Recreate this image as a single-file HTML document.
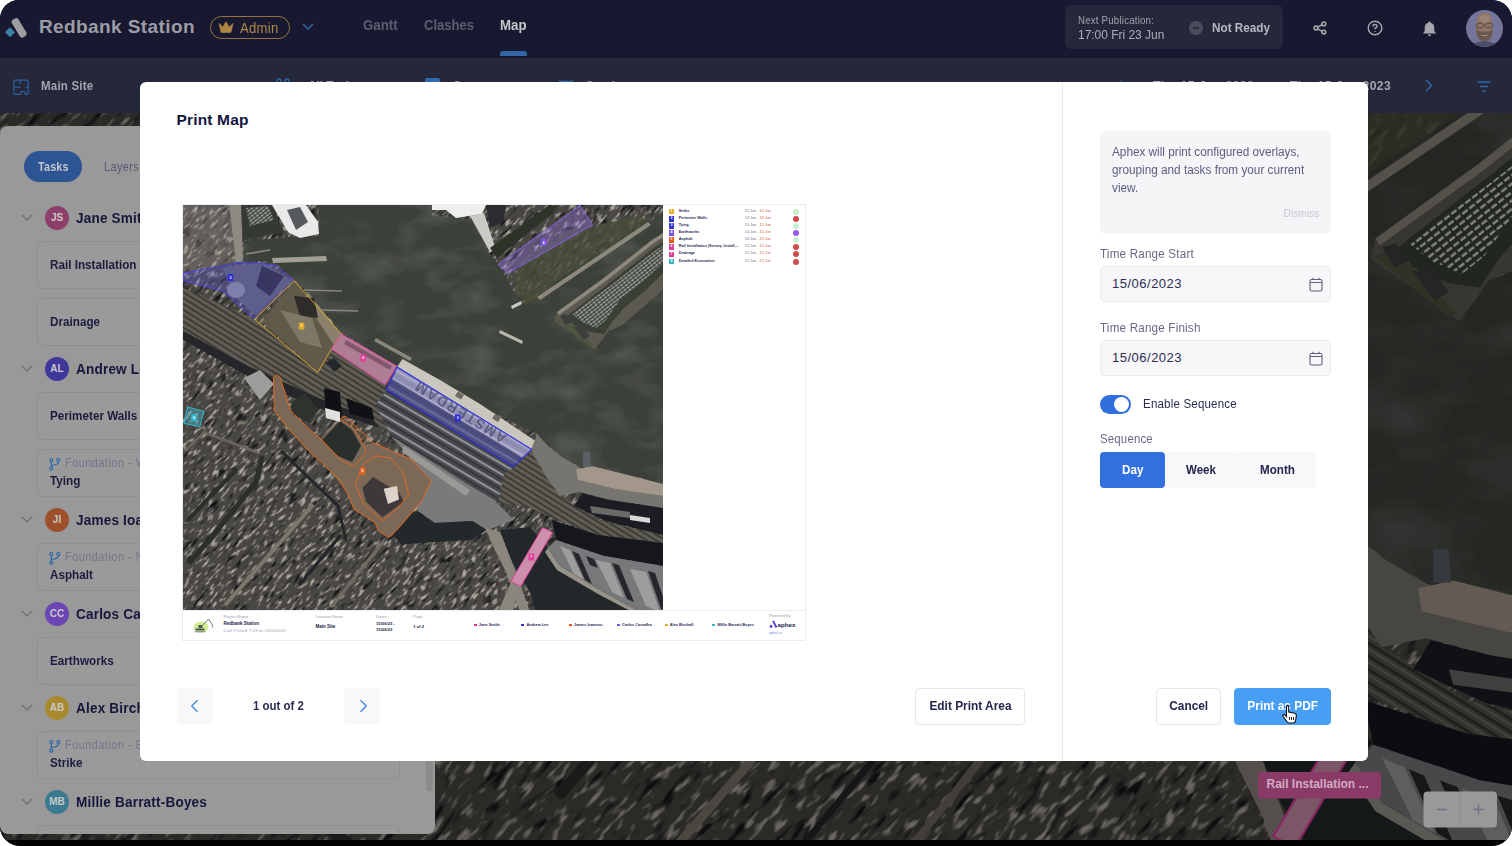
<!DOCTYPE html>
<html lang="en">
<head>
<meta charset="utf-8">
<title>Redbank Station - Print Map</title>
<style>
*{box-sizing:border-box;margin:0;padding:0}
html,body{width:1512px;height:846px;overflow:hidden;background:#fff}
body{font-family:"Liberation Sans",sans-serif;position:relative}
.abs{position:absolute}
#win{position:absolute;left:0;top:0;width:1512px;height:846px;border-radius:19px 20px 20px 20px;overflow:hidden;background:#000}
#nav{position:absolute;left:0;top:0;width:1512px;height:58px;background:#181930}
#sub{position:absolute;left:0;top:58px;width:1512px;height:55px;background:#25273a}
#map{position:absolute;left:0;top:113px;width:1512px;height:727px;background:#2f332c;overflow:hidden}
.t{position:absolute;white-space:nowrap;line-height:1;transform:scaleX(.9);transform-origin:0 50%}
/* left panel */
#panel{position:absolute;left:0;top:126px;width:435px;height:708px;background:#999999;border-radius:8px 8px 8px 8px;overflow:hidden}
.card{position:absolute;left:37px;width:363px;height:48px;border:1px solid #8f8f8f;border-radius:6px;background:#9a9a9a}
.card .n{transform:scaleX(.975);transform-origin:0 50%;position:absolute;left:12px;font-size:12px;font-weight:700;color:#1b1c3e;white-space:nowrap;line-height:1}
.card .f{transform:scaleX(.9);transform-origin:0 50%;position:absolute;left:26.500px;top:6.700px;font-size:12px;color:#737589;white-space:nowrap;line-height:1;letter-spacing:.6px}
.card svg{position:absolute;left:11.300px;top:7.600px}
.av{position:absolute;left:45px;width:24px;height:24px;border-radius:50%;color:#c9c9c9;font-size:10px;font-weight:700;text-align:center;line-height:24px}
.gn{transform:scaleX(.935);transform-origin:0 50%;position:absolute;left:75.500px;font-size:14.500px;font-weight:700;color:#15163b;white-space:nowrap;line-height:1;letter-spacing:.2px}
.chev{position:absolute;left:21px}
/* modal */
#modal{position:absolute;left:140px;top:82px;width:1228px;height:679px;background:#fff;border-radius:6px;overflow:hidden}
.lbl{transform:scaleX(.97);transform-origin:0 50%;position:absolute;font-size:12px;color:#676982;white-space:nowrap;line-height:1;letter-spacing:.2px}
.inp{position:absolute;left:960px;width:231px;height:36px;background:#f7f7f9;border:1px solid #e9e9ee;border-radius:5px}
.inp span{position:absolute;left:11px;top:10px;font-size:13px;color:#2a2c55;line-height:1;letter-spacing:.5px}
.btn b{display:inline-block;transform:scaleX(.99);font-weight:700}
.btn{position:absolute;height:36.600px;border:1px solid #e7e7ec;border-radius:4px;background:#fff;font-size:12px;font-weight:700;color:#23254f;text-align:center;line-height:34.600px;white-space:nowrap}
</style>
</head>
<body>
<div id="win">

<!-- NAVBAR -->
<div id="nav">
  <svg class="abs" style="left:0;top:14px" width="32" height="28" viewBox="0 14 32 28">
    <rect x="15.300" y="17.600" width="7.600" height="20.400" rx="2.600" fill="#9d9da2" transform="rotate(-31 19.100 27.800)"/>
    <path d="M10 27.200 L15 32.200 L10 37.200 L5 32.200 Z" fill="#3f80a8"/>
  </svg>
  <div class="t" style="left:39px;top:16.600px;font-size:19px;font-weight:700;color:#9c9ca5;letter-spacing:.4px;transform:none">Redbank Station</div>
  <div class="abs" style="left:210px;top:16px;width:80px;height:23px;border:1.300px solid #96723f;border-radius:12px"></div>
  <svg class="abs" style="left:218px;top:21px" width="16" height="13" viewBox="0 0 16 13"><path d="M1 2.400 L4.800 6 L8 0.800 L11.200 6 L15 2.400 L13.200 10.600 Q13 11.600 12 11.600 H4 Q3 11.600 2.800 10.600 Z" fill="#b08644" stroke="#b08644" stroke-width=".6" stroke-linejoin="round"/></svg>
  <div class="t" style="left:239.500px;top:21px;font-size:14px;color:#b18948;letter-spacing:.3px;transform:scaleX(.935)">Admin</div>
  <svg class="abs" style="left:302px;top:23px" width="12" height="8" viewBox="0 0 12 8"><path d="M1 1 L6 6 L11 1" stroke="#3566a4" stroke-width="1.500" fill="none"/></svg>
  <div class="t" style="left:363px;top:17px;font-size:15px;font-weight:700;color:#5c5d6f;transform:scaleX(.885)">Gantt</div>
  <div class="t" style="left:424px;top:17px;font-size:15px;font-weight:700;color:#5c5d6f;transform:scaleX(.87)">Clashes</div>
  <div class="t" style="left:500px;top:17px;font-size:15px;font-weight:700;color:#c6c6cb;transform:scaleX(.885)">Map</div>
  <div class="abs" style="left:500px;top:51px;width:27px;height:4.500px;background:#3464a8;border-radius:3px 3px 0 0"></div>
  <div class="abs" style="left:1065px;top:5px;width:218px;height:44px;background:#25273a;border-radius:6px"></div>
  <div class="t" style="left:1078px;top:15.500px;font-size:10px;color:#a0a1ad;letter-spacing:.2px;transform:scaleX(.97)">Next Publication:</div>
  <div class="t" style="left:1078px;top:28.500px;font-size:12px;color:#adaeba;transform:scaleX(.995)">17:00 Fri 23 Jun</div>
  <div class="abs" style="left:1189px;top:21px;width:14px;height:14px;border-radius:50%;background:#4b4c5c"></div>
  <div class="abs" style="left:1193px;top:27px;width:6px;height:2px;background:#2b2d40"></div>
  <div class="t" style="left:1211.500px;top:21.500px;font-size:12px;font-weight:700;color:#b7b8c1;transform:scaleX(.977)">Not Ready</div>
  <svg class="abs" style="left:1312.500px;top:20.500px" width="14" height="14" viewBox="0 0 14 14" fill="none" stroke="#a6a6ac" stroke-width="1.600"><circle cx="10.800" cy="2.900" r="1.900"/><circle cx="3" cy="7" r="1.900"/><circle cx="10.800" cy="11.100" r="1.900"/><path d="M4.700 6.100 L9.100 3.800 M4.700 7.900 L9.100 10.200"/></svg>
  <svg class="abs" style="left:1366.500px;top:19.500px" width="16" height="16" viewBox="0 0 16 16" fill="none" stroke="#a6a6ac" stroke-width="1.400"><circle cx="8" cy="8" r="6.800"/><path d="M6 6.400 Q6 4.400 8 4.400 Q10 4.400 10 6.200 Q10 7.300 8 8.300 V9.300" stroke-width="1.500"/><circle cx="8" cy="11.400" r=".7" fill="#a6a6ac" stroke="none"/></svg>
  <svg class="abs" style="left:1422px;top:21px" width="15" height="16" viewBox="0 0 15 16"><path d="M7.500 0.600 Q8.700 0.600 8.700 1.800 Q12.300 2.800 12.300 7 V10 L14 12.500 H1 L2.700 10 V7 Q2.700 2.800 6.300 1.800 Q6.300 0.600 7.500 0.600 Z M5.900 13.400 H9.100 Q9.100 15.200 7.500 15.200 Q5.900 15.200 5.900 13.400Z" fill="#a6a6ac"/></svg>
  <div class="abs" style="left:1466px;top:9.500px;width:37px;height:37px;border-radius:50%;background:#74759a;overflow:hidden">
    <svg width="37" height="37" viewBox="0 0 37 37"><ellipse cx="18.500" cy="40" rx="15" ry="9" fill="#4b4e6a"/><path d="M10.200 14 Q10.200 2.500 18.500 2.500 Q26.800 2.500 26.800 14 V20 Q26.800 31 18.500 31 Q10.200 31 10.200 20 Z" fill="#8f7468"/><ellipse cx="18.500" cy="9" rx="5.500" ry="4" fill="#a38a7c" opacity=".7"/><path d="M10.400 19 Q12 22 18.500 21.500 Q25 22 26.600 19 V21 Q26.600 31 18.500 31 Q10.400 31 10.400 21 Z" fill="#6a5850"/><path d="M14.500 24.500 Q18.500 27.500 22.500 24.500 Q18.500 26 14.500 24.500Z" fill="#b9a59a"/><rect x="10.500" y="13.200" width="7" height="4.600" rx="2" fill="none" stroke="#4d443f" stroke-width=".9"/><rect x="19.500" y="13.200" width="7" height="4.600" rx="2" fill="none" stroke="#4d443f" stroke-width=".9"/></svg>
  </div>
</div>

<!-- SUB BAR -->
<div id="sub">
  <svg class="abs" style="left:12.500px;top:20.500px" width="16" height="16.500" viewBox="0 0 16 16" fill="none" stroke="#2f619f" stroke-width="1.200" stroke-linejoin="round"><path d="M0.800 2.500 Q0.800 0.800 2.500 0.800 H13.500 Q15.200 0.800 15.200 2.500 V13.500 Q15.200 15.200 13.500 15.200 H12.400 L11.700 12.300 H8.600 L7.200 15.200 H2.500 Q0.800 15.200 0.800 13.500 Z M7.200 0.800 V5 M0.800 7.800 H7.400 M12.400 7.800 H15.200"/></svg>
  <div class="t" style="left:41px;top:22.200px;font-size:12px;font-weight:700;color:#a3a4ad;letter-spacing:.2px;transform:scaleX(.96)">Main Site</div>
  <svg class="abs" style="left:276px;top:20px" width="14" height="14" viewBox="0 0 14 14" fill="none" stroke="#2f68ad" stroke-width="1.3"><circle cx="3" cy="3" r="2"/><circle cx="11" cy="3" r="2"/></svg>
  <div class="t" style="left:308px;top:21px;font-size:13px;font-weight:700;color:#a3a4ad">All Tasks</div>
  <div class="abs" style="left:425px;top:20px;width:15px;height:12px;background:#2f68ad;border-radius:2px"></div>
  <div class="t" style="left:453px;top:21px;font-size:13px;font-weight:700;color:#a3a4ad">Sequence</div>
  <svg class="abs" style="left:558px;top:21px" width="16" height="12" viewBox="0 0 16 12" fill="none" stroke="#2f68ad" stroke-width="1.3"><path d="M1 1 L3 2.5 H13 L15 1 M3 2.5 V10"/></svg>
  <div class="t" style="left:585px;top:21px;font-size:13px;font-weight:700;color:#a3a4ad">Overlays</div>
  <svg class="abs" style="left:1114px;top:22px" width="8" height="13" viewBox="0 0 8 13"><path d="M7 1 L1.5 6.500 L7 12" stroke="#2f68ad" stroke-width="1.4" fill="none"/></svg>
  <div class="t" style="left:1153px;top:21px;font-size:13.500px;font-weight:700;color:#a3a4ad;letter-spacing:.5px">Thu 15 Jun 2023</div>
  <div class="t" style="left:1290px;top:21px;font-size:13.500px;font-weight:700;color:#a3a4ad;letter-spacing:.5px">Thu 15 Jun 2023</div>
  <svg class="abs" style="left:1425px;top:21px" width="8" height="13" viewBox="0 0 8 13"><path d="M1 1 L6.500 6.500 L1 12" stroke="#2f68ad" stroke-width="1.4" fill="none"/></svg>
  <svg class="abs" style="left:1477px;top:23px" width="14" height="11" viewBox="0 0 14 11"><path d="M0.500 1 H13.500 M3 5.500 H11 M5.500 10 H8.500" stroke="#2f68ad" stroke-width="1.6" fill="none"/></svg>
</div>

<!-- MAP -->
<div id="map"><svg class="abs" style="left:0;top:0" width="1512" height="727" viewBox="0 113 1512 727" font-family="Liberation Sans, sans-serif">
<use href="#mapg" transform="translate(138.900 -454.100) scale(2.220)"/>
<rect x="0" y="113" width="1512" height="727" fill="#000" opacity=".4"/>
<rect x="1258" y="772" width="123" height="26.500" rx="3" fill="#8a3a66"/>
<text x="1266.500" y="788.400" font-size="13" font-weight="700" fill="#d3aac4" textLength="102" lengthAdjust="spacingAndGlyphs">Rail Installation ...</text>
<rect x="1423.500" y="791.500" width="73.500" height="36" rx="4" fill="#999"/>
<rect x="1459.800" y="791.500" width="1" height="36" fill="#8c8c8c"/>
<path d="M1437 809.500 H1447 M1473.500 809.500 H1483.500 M1478.500 804.500 V814.500" stroke="#6e6f8a" stroke-width="1.300"/>
</svg></div>

<!-- LEFT PANEL -->
<div id="panel">
<div class="abs" style="left:24px;top:25px;width:58.400px;height:30.800px;border-radius:15.400px;background:#2d5594"></div>
<div class="t" style="left:38px;top:34.500px;font-size:12px;font-weight:700;color:#c3c6cc;letter-spacing:.2px">Tasks</div>
<div class="t" style="left:104.300px;top:34.500px;font-size:12px;color:#565878;letter-spacing:.5px">Layers</div>
<svg class="chev" style="top:88px" width="12" height="8" viewBox="0 0 12 8"><path d="M1 1 L6 6 L11 1" stroke="#6c6c6c" stroke-width="1.2" fill="none"/></svg><div class="av" style="top:80px;background:#8e3f69">JS</div><div class="gn" style="top:84.7px">Jane Smith</div>
<div class="card" style="top:115px"><span class="n" style="top:17.400px">Rail Installation (Survey, Install, Test)</span></div>
<div class="card" style="top:172px"><span class="n" style="top:17.400px">Drainage</span></div>
<svg class="chev" style="top:239px" width="12" height="8" viewBox="0 0 12 8"><path d="M1 1 L6 6 L11 1" stroke="#6c6c6c" stroke-width="1.2" fill="none"/></svg><div class="av" style="top:231px;background:#3f379a">AL</div><div class="gn" style="top:235.7px">Andrew Lee</div>
<div class="card" style="top:266px"><span class="n" style="top:17.400px">Perimeter Walls</span></div>
<div class="card" style="top:323px"><svg width="12" height="13" viewBox="0 0 12 13" fill="none" stroke="#2f6aa8" stroke-width="1.200"><circle cx="2.300" cy="2.200" r="1.500"/><circle cx="2.300" cy="10.700" r="1.500"/><circle cx="9.400" cy="2.200" r="1.500"/><path d="M2.300 3.700 V9.200 M9.400 3.700 Q9.400 6.800 2.300 7.300"/></svg><span class="f">Foundation - West</span><span class="n" style="top:25.200px">Tying</span></div>
<svg class="chev" style="top:390px" width="12" height="8" viewBox="0 0 12 8"><path d="M1 1 L6 6 L11 1" stroke="#6c6c6c" stroke-width="1.2" fill="none"/></svg><div class="av" style="top:382px;background:#9c4f28">JI</div><div class="gn" style="top:386.7px">James Ioannou</div>
<div class="card" style="top:417px"><svg width="12" height="13" viewBox="0 0 12 13" fill="none" stroke="#2f6aa8" stroke-width="1.200"><circle cx="2.300" cy="2.200" r="1.500"/><circle cx="2.300" cy="10.700" r="1.500"/><circle cx="9.400" cy="2.200" r="1.500"/><path d="M2.300 3.700 V9.200 M9.400 3.700 Q9.400 6.800 2.300 7.300"/></svg><span class="f">Foundation - North</span><span class="n" style="top:25.200px">Asphalt</span></div>
<svg class="chev" style="top:484px" width="12" height="8" viewBox="0 0 12 8"><path d="M1 1 L6 6 L11 1" stroke="#6c6c6c" stroke-width="1.2" fill="none"/></svg><div class="av" style="top:476px;background:#6b46b4">CC</div><div class="gn" style="top:480.7px">Carlos Carvalho</div>
<div class="card" style="top:511px"><span class="n" style="top:17.400px">Earthworks</span></div>
<svg class="chev" style="top:578px" width="12" height="8" viewBox="0 0 12 8"><path d="M1 1 L6 6 L11 1" stroke="#6c6c6c" stroke-width="1.2" fill="none"/></svg><div class="av" style="top:570px;background:#a88a2c">AB</div><div class="gn" style="top:574.7px">Alex Birchall</div>
<div class="card" style="top:605px"><svg width="12" height="13" viewBox="0 0 12 13" fill="none" stroke="#2f6aa8" stroke-width="1.200"><circle cx="2.300" cy="2.200" r="1.500"/><circle cx="2.300" cy="10.700" r="1.500"/><circle cx="9.400" cy="2.200" r="1.500"/><path d="M2.300 3.700 V9.200 M9.400 3.700 Q9.400 6.800 2.300 7.300"/></svg><span class="f">Foundation - East</span><span class="n" style="top:25.200px">Strike</span></div>
<svg class="chev" style="top:672px" width="12" height="8" viewBox="0 0 12 8"><path d="M1 1 L6 6 L11 1" stroke="#6c6c6c" stroke-width="1.2" fill="none"/></svg><div class="av" style="top:664px;background:#3c7a92">MB</div><div class="gn" style="top:668.7px">Millie Barratt-Boyes</div>
<div class="card" style="top:699px"><span class="n" style="top:17.400px">Detailed Excavation</span></div>
<div class="abs" style="left:426px;top:400px;width:7px;height:265px;border-radius:4px;background:#8b8b8b"></div>
</div>

<!-- MODAL -->
<div id="modal">
  <div class="t" style="left:36.600px;top:29.800px;font-size:15.500px;font-weight:700;color:#14153f;letter-spacing:.15px;transform:scaleX(1)">Print Map</div>
  <div class="abs" style="left:922px;top:0;width:1px;height:679px;background:#e9e9ee"></div>

  <!-- PREVIEW -->
  <div id="pv" class="abs" style="left:42px;top:122px;width:624px;height:437px;background:#fff;border:1px solid #ececf0;overflow:hidden"><svg class="abs" style="left:0;top:0" width="480" height="405" viewBox="183 205 480 405" font-family="Liberation Sans, sans-serif">
<defs>
  <filter id="city" x="0" y="0" width="100%" height="100%">
    <feTurbulence type="fractalNoise" baseFrequency="0.11 0.34" numOctaves="2" seed="7" result="n"/>
    <feColorMatrix in="n" type="matrix" values="0 0 0 0 0  0 0 0 0 0  0 0 0 0 0  5 0 0 0 -2.82" result="a"/>
    <feFlood flood-color="#b4afa6" result="f"/>
    <feComposite in="f" in2="a" operator="in" result="lt"/>
    <feTurbulence type="fractalNoise" baseFrequency="0.07 0.26" numOctaves="2" seed="23" result="n2"/>
    <feColorMatrix in="n2" type="matrix" values="0 0 0 0 0  0 0 0 0 0  0 0 0 0 0  0 5 0 0 -2.8" result="a2"/>
    <feFlood flood-color="#14161a" result="f2"/>
    <feComposite in="f2" in2="a2" operator="in" result="dk"/>
    <feMerge result="m"><feMergeNode in="SourceGraphic"/><feMergeNode in="lt"/><feMergeNode in="dk"/></feMerge>
    <feComposite in="m" in2="SourceAlpha" operator="in"/>
  </filter>
  <filter id="wat" x="0" y="0" width="100%" height="100%">
    <feTurbulence type="fractalNoise" baseFrequency="0.02 0.04" numOctaves="3" seed="4" result="n"/>
    <feColorMatrix in="n" type="matrix" values="0 0 0 0 1  0 0 0 0 1  0 0 0 0 1  0.12 0 0 0 -0.055" result="a"/>
    <feMerge result="m"><feMergeNode in="SourceGraphic"/><feMergeNode in="a"/></feMerge>
    <feComposite in="m" in2="SourceAlpha" operator="in"/>
  </filter>
  <pattern id="roof" width="9" height="9" patternUnits="userSpaceOnUse" patternTransform="rotate(30.5)">
    <rect width="9" height="9" fill="#45474b"/><rect y="0" width="9" height="2.2" fill="#8f9194"/><rect y="5" width="9" height="1" fill="#2c2e32"/>
  </pattern>
  <pattern id="rails" width="5" height="5" patternUnits="userSpaceOnUse" patternTransform="rotate(32)">
    <rect width="5" height="5" fill="#57544c"/><rect y="0" width="5" height="1.300" fill="#34332f"/><rect y="2.600" width="5" height=".7" fill="#77736a"/>
  </pattern>
  <pattern id="boats" width="4" height="3" patternUnits="userSpaceOnUse" patternTransform="rotate(-38)">
    <rect width="4" height="3" fill="#3a4036"/><rect x="0.5" y="0.6" width="3" height="1.1" fill="#dcdcdc"/>
  </pattern>
</defs>
<g id="mapg">
<!-- city base -->
<g transform="rotate(-48 320 410)"><rect x="-125" y="-35" width="890" height="890" fill="#484642" filter="url(#city)"/></g>
<!-- streets / canals in old town -->
<g fill="none" stroke-linecap="round">
  <path d="M262 458 L256 482 L216 532 L190 562" stroke="#2a2f29" stroke-width="5"/>
  <path d="M186 450 L204 432 L256 452" stroke="#6a665e" stroke-width="2.500"/>
  <path d="M312 506 L226 604" stroke="#7c766c" stroke-width="4"/>
  <path d="M383 542 L332 606" stroke="#6f6a62" stroke-width="3.500"/>
  <path d="M282 452 L338 506 L346 540" stroke="#25282a" stroke-width="3"/>
  <path d="M188 520 L236 470" stroke="#2b2f2a" stroke-width="4"/>
  <path d="M340 536 L300 584" stroke="#22262a" stroke-width="3"/>
  <path d="M60 560 L130 610" stroke="#2b2f2a" stroke-width="5"/>
  <path d="M-40 330 L120 420 L180 470" stroke="#6a665e" stroke-width="3"/>
</g>
<path fill="#a29d94" opacity=".3" d="M100 205 L229 205 L236 262 L183 273 L100 240 Z"/>
<!-- river -->
<path filter="url(#wat)" fill="#3b4139" d="M319 205 L319 236 L287 237 L244 241 L243 261 L274 262 L294 280 L315 299 L340 332 L396 366 L430 378 L468 400 L537 434 L548 446 L562 457 L581 468 L592 466 L606 470 L663 483 L720 496 L720 250 L663 290 L622 325 L608 331 L595 349 L555 321 L557 312 L604 278 L652 240 L663 233 L663 212 L648 222 L554 282 L537 297 L527 307 L514 292 L497 262 L487 250 L480 220 L432 215 L432 205 Z"/>
<!-- north bank parks -->
<path fill="#474e38" opacity=".8" d="M520 262 L566 230 L600 225 L640 215 L648 222 L554 282 L537 297 L527 307 L514 292 Z"/>
<path fill="#8d887c" d="M537 297 L648 222 L651 225 L540 300 Z"/>
<!-- marina top-left -->
<path fill="#343a32" d="M241 205 L272 205 L284 232 L243 240 Z"/>
<path fill="url(#boats)" d="M246 208 L268 206 L274 220 L250 226 Z"/>
<path fill="#8e8a82" d="M229 205 L241 205 L243 262 L236 262 Z"/>
<!-- white buildings top -->
<path fill="#e9e9e9" d="M272 205 L306 205 L318 222 L319 234 L300 238 L288 232 Z"/>
<path fill="#55585c" d="M287 210 L300 207 L308 222 L296 230 Z"/>
<path fill="#efefef" d="M432 205 L486 205 L482 214 L456 218 L446 210 L432 210 Z"/>
<path fill="#c9c9c6" d="M470 216 L484 213 L496 250 L490 252 Z"/>
<path fill="#2a2c30" d="M486 205 L506 205 L504 222 L490 228 Z"/>
<!-- inner canal north -->
<path fill="#2d3329" d="M497 258 L552 214 L558 206 L548 206 L490 248 Z"/>
<!-- marina island -->
<path fill="#5c5a50" d="M555 321 L557 312 L604 278 L652 240 L663 233 L720 196 L720 250 L663 290 L622 325 L608 331 L595 349 Z"/>
<path fill="#8c887c" d="M557 312 L604 278 L652 240 L663 233 L720 196 L720 199 L665 236 L654 243 L606 281 L559 315 Z"/>
<path fill="#3a4036" d="M567 316 L608 284 L655 247 L720 204 L720 236 L668 268 L646 290 L624 308 L612 322 L604 334 L590 332 L574 325 Z"/>
<path fill="url(#boats)" d="M572 314 L610 286 L656 250 L700 221 L704 232 L664 262 L640 284 L620 300 L606 320 L596 328 L582 322 Z"/>
<path fill="#4f563f" d="M556 320 L566 317 L576 328 L594 346 L590 347 Z"/>
<path fill="#3c3e3c" d="M560 316 L566 314 L572 322 L566 325 Z M574 327 L582 325 L590 336 L584 340 Z"/>
<!-- docks on river -->
<g stroke="#8b877d" stroke-width="1.600" fill="none">
  <path d="M304 290 L342 291"/><path d="M322 310 L358 311"/><path d="M246 254 L270 250"/>
</g>
<path fill="#a39f94" d="M272 258 L326 256 L327 261 L273 263 Z"/>
<path fill="#8a867c" d="M376 338 L412 358 L410 361 L374 341 Z"/>
<!-- barges -->
<path fill="#b9b6ac" d="M500 330 L523 341 L522 344 L499 333 Z"/>
<path fill="#c9c9c9" d="M511 306 L521 301 L522 304 L512 309 Z"/>
<!-- tracks west of station -->
<path fill="url(#rails)" d="M120 262 L183 288 L254 319 L319 372 L386 390 L376 406 L390 436 L373 419 L321 399 L274 378 L248 366 L183 331 L120 300 Z"/>
<path fill="#24262a" d="M183 331 L248 366 L274 378 L321 399 L373 419 L380 428 L318 408 L270 388 L244 374 L183 340 Z"/>
<path fill="url(#rails)" d="M318.600 372.400 L331.700 349.300 L385 384.400 L386 390.700 Z"/>
<path fill="#23282a" d="M326 362 L334 358 L342 366 L334 372 Z"/>
<!-- courthouse -->
<path fill="#9c9e9c" d="M244 378 L260 370 L274 384 L260 400 Z"/>
<!-- yellow zone ground -->
<path fill="#58554c" d="M294 281 L341 334 L331 349 L318 372 L262 322 Z"/>
<path fill="#857e70" d="M308 292 L341 334 L334 345 L304 300 Z"/>
<path fill="#23252a" d="M294 296 L314 298 L318 318 L300 316 Z"/>
<path fill="#77746b" d="M280 310 L312 318 L322 348 L300 342 Z"/>
<!-- buildings in blue zone -->
<path fill="#5e5f68" d="M222 268 L262 262 L292 280 L256 316 L238 300 Z"/>
<ellipse cx="236" cy="290" rx="9" ry="8" fill="#8d8e94"/>
<path fill="#26272c" d="M262 266 L284 276 L270 296 L256 286 Z"/>
<!-- bus platform (pink zone ground) -->
<path fill="#8b8982" d="M341 334 L397 366 L385 385 L331 349 Z"/>
<path fill="#4a4844" d="M346 340 L392 366 L390 370 L344 344 Z"/>
<!-- station platform north (light) -->
<path fill="#c9c6bd" d="M397 367.100 L531.800 449.400 L537 442 L480 404 L440 380 L402.500 359 Z"/><path fill="#6d6a62" d="M455 396 L461 399.500 L464 395 L458 391.500 Z M492 418.500 L498 422 L501 417.500 L495 414 Z"/>
<!-- station roof -->
<path fill="url(#roof)" d="M386 390.700 L396.700 367 L531.500 449.400 L515 466.400 L496 502 L391 436 L375.500 405 Z"/>
<!-- forecourt south of station -->
<path fill="#7b7a7b" d="M391 436 L496 502 L514 520 L487 530 L472 521 L435 523 L418 511 L411 459 Z"/>
<path fill="#9b9996" d="M404 446 L470 490 L466 496 L402 452 Z"/>
<!-- tracks east of station -->
<path fill="url(#rails)" d="M504 474 L516 466 L531 450 L547 478 L560 496 L598 520 L663 535 L720 546 L720 556 L663 543 L598 535 L557 520 L530 508 L498 502 Z"/>
<!-- roads between shore and tracks -->
<path fill="#77756f" d="M531 450 L537 434 L548 446 L562 457 L581 468 L578 480 L615 489 L663 496 L720 506 L720 520 L663 508 L610 500 L580 492 L560 496 L547 478 Z"/>
<!-- quay plaza east -->
<path fill="#a3978b" d="M576 469.500 L592 466 L606 469.500 L663 484 L720 497 L720 508 L663 496 L615 489 L578 480 Z"/>
<path fill="#5b5f66" d="M583 452 L590 452 L591 467 L583 467 Z"/>
<!-- shadows/buildings between plaza and tracks -->
<path fill="#1b1d23" d="M582 493 L610 500 L663 508 L720 520 L720 546 L663 535 L606 521 L574 506 Z"/>
<path fill="#6b6a68" d="M590 506 L630 512 L630 518 L592 513 Z"/>
<path fill="#d8d8d6" d="M630 515 L650 518 L650 523 L630 520 Z"/>
<!-- shadows south of tracks east -->
<path fill="#15171d" d="M552 520 L598 535 L663 543 L720 556 L720 580 L663 566 L604 556 L556 540 Z"/>
<!-- SE modern blocks -->
<path fill="#76787a" d="M556 540 L604 556 L663 566 L720 580 L720 640 L640 612 L600 590 L560 566 L548 548 Z"/>
<path fill="#9c9e9e" d="M560 546 L570 550 L584 580 L574 574 Z M596 560 L610 563 L624 598 L612 592 Z M630 569 L646 572 L660 612 L646 606 Z"/>
<path fill="#25272b" d="M572 551 L579 554 L592 584 L585 580 Z M612 563 L619 565 L634 602 L627 599 Z M648 571 L655 573 L668 612 L661 609 Z M586 556 L594 559 L598 568 L590 565 Z"/>
<!-- south water -->
<path fill="#23282a" d="M396.700 513.700 L418 511.300 L434.600 523 L472.400 521 L486.600 530 L472.400 539.700 L434.600 542 L401.500 544.400 L393 535 Z"/>
<path fill="#22282a" d="M500 530 L530 527 L548 548 L560 566 L600 590 L640 612 L660 624 L540 624 L530 592 L512 562 Z"/>
<path fill="#97938a" d="M548 548 L560 566 L600 590 L640 612 L663 624 L655 624 L598 594 L557 570 L545 552 Z"/>
<path fill="#8a867d" d="M486 528 L500 532 L516 572 L530 612 L520 612 L506 572 L490 540 Z"/>
<path fill="#aaa69e" d="M542.600 527.800 L552.500 532.400 L520.700 586.300 L511 581.300 Z"/>
<path fill="#8a867d" d="M511 581.300 L520.700 586.300 L512 612 L498 612 Z"/>
<!-- orange zone ground (construction) -->
<path fill="#74685a" d="M273.400 377.400 L279.500 376.400 L284.500 390.500 L290.500 410.600 L308.600 428.600 L320.600 438.700 L340 419 L354 428.600 L363.600 445 L373 442.700 L394.400 452.200 L411 459.300 L431 480.600 L422.700 499.500 L411 513.700 L396.700 530.200 L388.500 537.300 L377.800 530.200 L375.500 523 L354 509 L347 492.400 L330 470 L308.600 450.700 L286.500 426.600 L274.400 410.600 Z"/>
<path fill="#2e332c" d="M291.500 402.500 L304.600 392.500 L318.600 410.600 L308.600 422.600 L292.500 414.600 Z"/>
<path fill="#2a2f2b" d="M322 440 L340 421 L352 430 L361 446 L352 462 L338 456 Z"/>
<path fill="#0f1115" d="M324 388 L340 392 L342 420 L326 414 Z M346 398 L372 408 L374 420 L350 414 Z"/>
<path fill="#e0e0de" d="M325 408 L340 412 L340 422 L326 418 Z"/>
<path fill="#30343c" d="M362.500 487.700 L373 477 L399 492.400 L403.800 501.800 L382.600 517.200 L366 501.800 Z"/>
<path fill="#dedcd8" d="M383.700 488.800 L397 486 L399 499.500 L388 504 Z"/>
<!-- overlays -->
<g stroke-width="1" stroke-linejoin="round">
  <path d="M183.700 273.200 L242 262 L275.600 265 L294.200 280.700 L254.500 319.200 L222.200 290.600 L183.700 280.700 Z" fill="rgba(96,92,225,.30)" stroke="#4a44e4"/>
  <path d="M294.200 280.700 L341.400 334 L331.400 349 L317.800 372.500 L254.500 319.200 Z" fill="rgba(225,170,40,.06)" stroke="#dba628"/>
  <path d="M341.400 334 L397 366.400 L385 384.600 L331.400 349 Z" fill="rgba(235,110,180,.36)" stroke="#e2429f"/>
  <path d="M397 367.100 L531.800 449.400 L522.500 457.900 L391.700 378.500 Z" fill="rgba(190,190,242,.62)" stroke="none"/><path d="M391.700 378.500 L522.500 457.900 L513.300 466.400 L386.400 389.800 Z" fill="rgba(84,84,160,.62)" stroke="none"/><path d="M397 367.100 L531.800 449.400 L513.300 466.400 L386.400 389.800 Z" fill="none" stroke="#2c2ce0" stroke-width="1.200"/>
  <path d="M498.200 264.500 L580 205.500 L592.500 224.800 L508 273.200 Z" fill="rgba(150,115,235,.34)" stroke="#8562ea"/>
  <path d="M542.600 527.800 L552.500 532.400 L520.700 586.300 L511 581.300 Z" fill="rgba(238,120,185,.50)" stroke="#e2429f"/>
  <path d="M187.600 407 L204 411.400 L199.800 426.700 L183.800 423.400 Z" fill="rgba(70,190,215,.40)" stroke="#35b9d3"/>
  <path d="M273.400 377.400 Q276 374 279.500 376.400 L284.500 390.500 L290.500 410.600 L308.600 428.600 L320.600 438.700 L340.700 460 L354 466.400 L366 452.200 L363.600 445 L354 428.600 L340 419 L345 416 L373 442.700 L394.400 452.200 L411 459.300 L431 480.600 L422.700 499.500 L411 513.700 L396.700 530.200 L388.500 537.300 L377.800 530.200 L375.500 523 L354 509 L347 492.400 L340 480.600 L318.600 460 L308.600 450.700 L286.500 426.600 L274.400 410.600 Z" fill="rgba(230,120,50,.08)" stroke="#e2661f"/>
  <path d="M355.400 483 L363.600 464 L375.500 455.700 L390.800 458 L403.800 473.500 L408.600 494.800 L399 506.600 L382.600 520.800 L363.600 504.200 Z" fill="none" stroke="#e2661f"/>
</g>
<text transform="translate(507.500 435.700) rotate(211.600)" font-size="14" font-weight="700" fill="#3a3c60" opacity=".6" letter-spacing="1.600">AMSTERDAM</text>
</g>
<g font-size="3.500" font-weight="700" fill="#fff" text-anchor="middle">
  <rect x="227.600" y="274" width="5.600" height="7" fill="#3030d2"/><text x="230.400" y="278.800">3</text>
  <rect x="298.800" y="322.600" width="5.600" height="7" fill="#e0a824"/><text x="301.600" y="327.400">1</text>
  <rect x="360.400" y="354.600" width="5.600" height="7" fill="#e0409a"/><text x="363.200" y="359.400">6</text>
  <rect x="455" y="414.400" width="5.600" height="7" fill="#3030d8"/><text x="457.800" y="419.200">2</text>
  <rect x="540.800" y="238.700" width="5.600" height="7" fill="#7a52e6"/><text x="543.600" y="243.500">4</text>
  <rect x="359.600" y="467.600" width="5.600" height="7" fill="#e2661f"/><text x="362.400" y="472.400">5</text>
  <rect x="528.500" y="553.500" width="5.600" height="7" fill="#e0409a"/><text x="531.300" y="558.300">7</text>
  <rect x="191.200" y="414.300" width="5.600" height="7" fill="#35b9d3"/><text x="194" y="419.100">8</text>
</g>

</svg>
<div class="abs" style="left:0;top:405px;width:622px;height:1px;background:#ececf1"></div>
<div id="lg" style="position:absolute;left:0;top:.6px;font-size:3.800px;line-height:1;white-space:nowrap">
<div class="abs" style="left:485.800px;top:3.20px;width:5.200px;height:5.600px;background:#e0b128;color:#fff;font-weight:700;font-size:3.500px;text-align:center;line-height:5.600px">1</div><div class="abs" style="left:495.700px;top:4.00px;font-weight:700;color:#2a2c5a">Strike</div><div class="abs" style="left:561.800px;top:4.00px;color:#6a6c88">15 Jun - <span style="color:#d2572a">15 Jun</span></div><div class="abs" style="left:609.600px;top:3.00px;width:6px;height:6px;border-radius:50%;background:#c4f0cc"></div>
<div class="abs" style="left:485.800px;top:10.34px;width:5.200px;height:5.600px;background:#3030c4;color:#fff;font-weight:700;font-size:3.500px;text-align:center;line-height:5.600px">2</div><div class="abs" style="left:495.700px;top:11.14px;font-weight:700;color:#2a2c5a">Perimeter Walls</div><div class="abs" style="left:561.800px;top:11.14px;color:#6a6c88">13 Jun - <span style="color:#d2572a">16 Jun</span></div><div class="abs" style="left:609.600px;top:10.14px;width:6px;height:6px;border-radius:50%;background:#cf4a4a"></div>
<div class="abs" style="left:485.800px;top:17.48px;width:5.200px;height:5.600px;background:#3636cc;color:#fff;font-weight:700;font-size:3.500px;text-align:center;line-height:5.600px">3</div><div class="abs" style="left:495.700px;top:18.28px;font-weight:700;color:#2a2c5a">Tying</div><div class="abs" style="left:561.800px;top:18.28px;color:#6a6c88">15 Jun - <span style="color:#d2572a">15 Jun</span></div><div class="abs" style="left:609.600px;top:17.28px;width:6px;height:6px;border-radius:50%;background:#c4f0cc"></div>
<div class="abs" style="left:485.800px;top:24.62px;width:5.200px;height:5.600px;background:#7a55dc;color:#fff;font-weight:700;font-size:3.500px;text-align:center;line-height:5.600px">4</div><div class="abs" style="left:495.700px;top:25.42px;font-weight:700;color:#2a2c5a">Earthworks</div><div class="abs" style="left:561.800px;top:25.42px;color:#6a6c88">14 Jun - <span style="color:#d2572a">15 Jun</span></div><div class="abs" style="left:609.600px;top:24.42px;width:6px;height:6px;border-radius:50%;background:#9857e6"></div>
<div class="abs" style="left:485.800px;top:31.76px;width:5.200px;height:5.600px;background:#dc5c1c;color:#fff;font-weight:700;font-size:3.500px;text-align:center;line-height:5.600px">5</div><div class="abs" style="left:495.700px;top:32.56px;font-weight:700;color:#2a2c5a">Asphalt</div><div class="abs" style="left:561.800px;top:32.56px;color:#6a6c88">14 Jun - <span style="color:#d2572a">15 Jun</span></div><div class="abs" style="left:609.600px;top:31.56px;width:6px;height:6px;border-radius:50%;background:#c4f0cc"></div>
<div class="abs" style="left:485.800px;top:38.90px;width:5.200px;height:5.600px;background:#dc3c92;color:#fff;font-weight:700;font-size:3.500px;text-align:center;line-height:5.600px">6</div><div class="abs" style="left:495.700px;top:39.70px;font-weight:700;color:#2a2c5a">Rail Installation (Survey, Install,...</div><div class="abs" style="left:561.800px;top:39.70px;color:#6a6c88">13 Jun - <span style="color:#d2572a">15 Jun</span></div><div class="abs" style="left:609.600px;top:38.70px;width:6px;height:6px;border-radius:50%;background:#cf4a4a"></div>
<div class="abs" style="left:485.800px;top:46.04px;width:5.200px;height:5.600px;background:#dc3c92;color:#fff;font-weight:700;font-size:3.500px;text-align:center;line-height:5.600px">7</div><div class="abs" style="left:495.700px;top:46.84px;font-weight:700;color:#2a2c5a">Drainage</div><div class="abs" style="left:561.800px;top:46.84px;color:#6a6c88">15 Jun - <span style="color:#d2572a">15 Jun</span></div><div class="abs" style="left:609.600px;top:45.84px;width:6px;height:6px;border-radius:50%;background:#cf4a4a"></div>
<div class="abs" style="left:485.800px;top:53.18px;width:5.200px;height:5.600px;background:#34b4cc;color:#fff;font-weight:700;font-size:3.500px;text-align:center;line-height:5.600px">8</div><div class="abs" style="left:495.700px;top:53.98px;font-weight:700;color:#2a2c5a">Detailed Excavation</div><div class="abs" style="left:561.800px;top:53.98px;color:#6a6c88">15 Jun - <span style="color:#d2572a">22 Jun</span></div><div class="abs" style="left:609.600px;top:52.98px;width:6px;height:6px;border-radius:50%;background:#cf4a4a"></div>
</div>
<svg class="abs" style="left:9px;top:412px" width="24" height="17" viewBox="0 0 24 17"><ellipse cx="9" cy="10" rx="7.500" ry="5.500" fill="#d5ec96"/><path d="M3.500 11.500 H12.500 V13.500 H3.500 Z M6.500 8 H10.500 V11 H6.500 Z" fill="#4d5a54"/><path d="M10.500 8.500 L16.500 2 L21 9 L20 10.500" stroke="#4d5a54" stroke-width=".8" fill="none"/><path d="M2.500 14.800 H13.500" stroke="#4d5a54" stroke-width=".7"/></svg>
<div class="abs" style="left:40.4px;top:410.2px;font-size:4.1px;line-height:1;white-space:nowrap;color:#9a9cb0;">Project Name</div>
<div class="abs" style="left:40.4px;top:416.5px;font-size:4.5px;line-height:1;white-space:nowrap;color:#1b1c46;font-weight:700;">Redbank Station</div>
<div class="abs" style="left:40.4px;top:423.5px;font-size:4.2px;line-height:1;white-space:nowrap;color:#a2a4b6;">Draft Printed: 7:23 on 13/06/2023</div>
<div class="abs" style="left:132.4px;top:410.2px;font-size:4.1px;line-height:1;white-space:nowrap;color:#9a9cb0;">Location Name</div>
<div class="abs" style="left:132.4px;top:419.9px;font-size:4.5px;line-height:1;white-space:nowrap;color:#1b1c46;font-weight:700;">Main Site</div>
<div class="abs" style="left:193.0px;top:410.2px;font-size:4.1px;line-height:1;white-space:nowrap;color:#9a9cb0;">Dates</div>
<div class="abs" style="left:193.0px;top:416.7px;font-size:4.2px;line-height:1;white-space:nowrap;color:#1b1c46;font-weight:700;">15/06/23 -</div>
<div class="abs" style="left:193.0px;top:422.7px;font-size:4.2px;line-height:1;white-space:nowrap;color:#1b1c46;font-weight:700;">15/06/23</div>
<div class="abs" style="left:230.2px;top:410.2px;font-size:4.1px;line-height:1;white-space:nowrap;color:#9a9cb0;">Page</div>
<div class="abs" style="left:230.2px;top:419.7px;font-size:4.2px;line-height:1;white-space:nowrap;color:#1b1c46;font-weight:700;">1 of 2</div>
<div class="abs" style="left:290.8px;top:418.6px;width:2.800px;height:2.800px;background:#dc3c92"></div><div class="abs" style="left:295.8px;top:418.1px;font-size:3.9px;line-height:1;white-space:nowrap;color:#2a2c5a;font-weight:700;">Jane Smith</div>
<div class="abs" style="left:338.4px;top:418.6px;width:2.800px;height:2.800px;background:#3030c4"></div><div class="abs" style="left:343.4px;top:418.1px;font-size:3.9px;line-height:1;white-space:nowrap;color:#2a2c5a;font-weight:700;">Andrew Lee</div>
<div class="abs" style="left:386.0px;top:418.6px;width:2.800px;height:2.800px;background:#dc5c1c"></div><div class="abs" style="left:391.0px;top:418.1px;font-size:3.9px;line-height:1;white-space:nowrap;color:#2a2c5a;font-weight:700;">James Ioannou</div>
<div class="abs" style="left:434.0px;top:418.6px;width:2.800px;height:2.800px;background:#7a55dc"></div><div class="abs" style="left:439.0px;top:418.1px;font-size:3.9px;line-height:1;white-space:nowrap;color:#2a2c5a;font-weight:700;">Carlos Carvalho</div>
<div class="abs" style="left:481.8px;top:418.6px;width:2.800px;height:2.800px;background:#e0b128"></div><div class="abs" style="left:486.8px;top:418.1px;font-size:3.9px;line-height:1;white-space:nowrap;color:#2a2c5a;font-weight:700;">Alex Birchall</div>
<div class="abs" style="left:529.4px;top:418.6px;width:2.800px;height:2.800px;background:#34b4cc"></div><div class="abs" style="left:534.4px;top:418.1px;font-size:3.9px;line-height:1;white-space:nowrap;color:#2a2c5a;font-weight:700;">Millie Barratt-Boyes</div>
<div class="abs" style="left:586.0px;top:409.3px;font-size:4.1px;line-height:1;white-space:nowrap;color:#9a9cb0;">Powered by</div>
<svg class="abs" style="left:586px;top:414.500px" width="9" height="10" viewBox="0 0 9 10"><path d="M3.200 1.200 L4.800 0.400 L8.400 7 L6.600 8 Z" fill="#5a3fe0"/><path d="M2 4.600 L3.800 6.400 L2 8.200 L0.200 6.400 Z" fill="#5a3fe0"/></svg>
<div class="abs" style="left:594.5px;top:416.9px;font-size:6.2px;line-height:1;white-space:nowrap;color:#1b1c46;font-weight:700;">aphex</div>
<div class="abs" style="left:586.0px;top:426.9px;font-size:3.2px;line-height:1;white-space:nowrap;color:#6a7fd8;">aphex.co</div>
</div>

  <!-- pagination -->
  <div class="abs" style="left:37px;top:606px;width:36px;height:36px;background:#f8f8fa;border-radius:4px"></div>
  <svg class="abs" style="left:50px;top:617px" width="9" height="14" viewBox="0 0 9 14"><path d="M7.500 1.200 L1.800 7 L7.500 12.800" stroke="#4a8fe0" stroke-width="1.500" fill="none"/></svg>
  <div class="t" style="left:113px;top:617.500px;font-size:12px;font-weight:700;color:#2a2c55;transform:scaleX(.955)">1 out of 2</div>
  <div class="abs" style="left:204px;top:606px;width:36px;height:36px;background:#f8f8fa;border-radius:4px"></div>
  <svg class="abs" style="left:219px;top:617px" width="9" height="14" viewBox="0 0 9 14"><path d="M1.500 1.200 L7.200 7 L1.500 12.800" stroke="#4a8fe0" stroke-width="1.500" fill="none"/></svg>
  <div class="btn" style="left:775px;top:606px;width:110px"><b>Edit Print Area</b></div>

  <!-- right column -->
  <div class="abs" style="left:960px;top:49px;width:231px;height:103px;background:#f5f5f7;border-radius:6px"></div>
  <div class="abs" style="left:972px;top:61px;width:214px;font-size:12px;line-height:18.200px;color:#5b5d82;transform:scaleX(.98);transform-origin:0 50%">Aphex will print configured overlays, grouping and tasks from your current view.</div>
  <div class="t" style="left:1143.600px;top:126.500px;font-size:10px;color:#c6c8d4;transform:none;letter-spacing:.1px">Dismiss</div>
  <div class="lbl" style="left:960px;top:165.600px">Time Range Start</div>
  <div class="inp" style="top:184px"><span>15/06/2023</span><svg class="abs" style="left:208px;top:10px" width="14" height="15" viewBox="0 0 14 15" fill="none" stroke="#5d5f7e" stroke-width="1.1"><rect x="1" y="2.500" width="12" height="11.500" rx="1.500"/><path d="M1 5.500 H13 M4 0.800 V3 M10 0.800 V3"/></svg></div>
  <div class="lbl" style="left:960px;top:239.600px">Time Range Finish</div>
  <div class="inp" style="top:258px"><span>15/06/2023</span><svg class="abs" style="left:208px;top:10px" width="14" height="15" viewBox="0 0 14 15" fill="none" stroke="#5d5f7e" stroke-width="1.1"><rect x="1" y="2.500" width="12" height="11.500" rx="1.500"/><path d="M1 5.500 H13 M4 0.800 V3 M10 0.800 V3"/></svg></div>
  <div class="abs" style="left:960px;top:313px;width:31px;height:19px;border-radius:10px;background:#2f6fde"></div>
  <div class="abs" style="left:974px;top:315px;width:15px;height:15px;border-radius:50%;background:#fff"></div>
  <div class="t" style="left:1003px;top:315.900px;font-size:12px;color:#2a2c55;letter-spacing:.2px;transform:scaleX(.96)">Enable Sequence</div>
  <div class="lbl" style="left:960px;top:350.900px;transform:scaleX(.95)">Sequence</div>
  <div class="abs" style="left:1025px;top:369.500px;width:73px;height:36.500px;background:#f8f8fa;border-radius:4px"></div><div class="abs" style="left:1098px;top:369.500px;width:78px;height:36.500px;background:#f8f8fa;border-radius:4px"></div>
  <div class="abs" style="left:960px;top:369.500px;width:64.700px;height:36.500px;background:#3270e0;border-radius:4px"></div>
  <div class="t" style="left:981.500px;top:381.800px;font-size:12px;font-weight:700;color:#fff;transform:scaleX(.97)">Day</div>
  <div class="t" style="left:1046.300px;top:381.800px;font-size:12px;font-weight:700;color:#23254f;transform:scaleX(.96)">Week</div>
  <div class="t" style="left:1119.700px;top:381.800px;font-size:12px;font-weight:700;color:#23254f;transform:scaleX(.97)">Month</div>
  <div class="btn" style="left:1016px;top:606px;width:65px"><b>Cancel</b></div>
  <div class="btn" style="left:1094px;top:606px;width:97px;background:#479ef5;border-color:#479ef5;color:#fff"><b>Print as PDF</b></div>
  <svg class="abs" style="left:1142px;top:623px" width="16" height="19" viewBox="0 0 16 19"><path d="M4.500 1.500 Q4.500 0.500 5.600 0.500 Q6.700 0.500 6.700 1.500 V7 L12.600 8.200 Q14.500 8.600 14.300 10.500 L13.600 15.500 Q13.400 18 11 18 H7.500 Q5.800 18 4.800 16.500 L1.200 11.500 Q0.500 10.400 1.500 9.800 Q2.400 9.300 3.200 10.200 L4.500 11.600 Z" fill="#fff" stroke="#111" stroke-width="1.100"/><path d="M7.500 12 V15 M9.500 12 V15 M11.500 12 V15" stroke="#111" stroke-width=".9"/></svg>
</div>

</div>
</body>
</html>
